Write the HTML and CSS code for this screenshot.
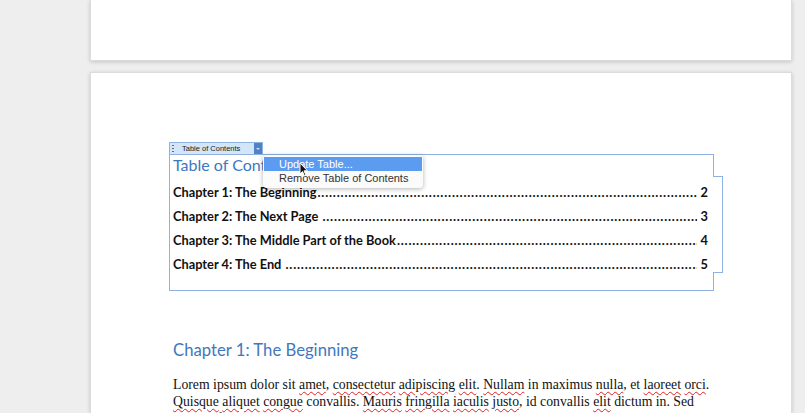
FILE: index.html
```html
<!DOCTYPE html>
<html lang="en">
<head>
  <meta charset="UTF-8" />
  <title>Document</title>
  <link rel="stylesheet" href="styles.css">
</head>
<body>

  <div class="canvas">
    <div class="page page-top"></div>

    <div class="page page-main">
      <div class="toc-wrap">
        <div class="toc-tab">
          <span class="grip"></span>
          <span class="tab-label">Table of Contents</span>
          <span class="tab-drop"></span>
        </div>

        <div class="toc-box">
          <div class="toc-title">Table of Contents</div>
          <div class="toc-row"><span>Chapter 1: The Beginning</span><span class="dots"></span><span>2</span></div>
          <div class="toc-row"><span>Chapter 2: The Next Page&nbsp;</span><span class="dots"></span><span>3</span></div>
          <div class="toc-row"><span>Chapter 3: The Middle Part of the Book</span><span class="dots"></span><span>4</span></div>
          <div class="toc-row"><span>Chapter 4: The End&nbsp;</span><span class="dots"></span><span>5</span></div>
        </div>

        <!-- context menu -->
        <div class="menu">
          <div class="menu-item active">Update Table...</div>
          <div class="menu-item">Remove Table of Contents</div>
        </div>

        <svg class="cursor" width="10" height="15" viewBox="0 0 10 15">
          <path d="M1 1 L1 12 L3.5 9.5 L5.5 14 L7 13.3 L5 8.8 L8.5 8.8 Z" fill="#111" stroke="#fff" stroke-width="1"/>
        </svg>
      </div>

      <h2 class="chapter">Chapter 1: The Beginning</h2>

      <p class="body-text">
        Lorem ipsum dolor sit <u>amet</u>, <u>consectetur</u> <u>adipiscing</u> <u>elit</u>. <u>Nullam</u> in maximus <u>nulla</u>, et <u>laoreet</u> <u>orci</u>.<br>
        <u>Quisque</u> <u>aliquet</u> <u>congue</u> convallis. <u>Mauris</u> <u>fringilla</u> <u>iaculis</u> <u>justo</u>, id convallis <u>elit</u> dictum in. Sed<br>
        <u>ultrices</u> <u>fermentum</u> tortor, in semper eros. <u>Quisque</u> semper ipsum vel nibh <u>vehicula</u>. Proin id lobortis elit.
      </p>
    </div>
  </div>

</body>
</html>
```

FILE: styles.css
```css
body {
  margin: 0;
  background: #eeeeee;
  overflow: hidden;
  height: 413px;
}

.canvas {
  padding-left: 90px;
  height: 413px;
  overflow: hidden;
}

.page {
  width: 702px;
  background: #fff;
  box-shadow: 0 1px 4px rgba(0,0,0,0.18);
  border: 1px solid #dcdcdc;
  box-sizing: border-box;
}

.page-top {
  height: 61px;
  border-top: none;
}

.page-main {
  margin-top: 11px;
  height: 341px;
  overflow: hidden;
  padding: 69px 0 0 78px;
  border-bottom: none;
}

.toc-wrap {
  position: relative;
  width: 545px;
}

/* content control tab */
.toc-tab {
  display: flex;
  height: 12px;
  width: 94px;
  background: #d3e5f8;
  border: 1px solid #8eb3e2;
  border-bottom: none;
  box-sizing: border-box;
  align-items: center;
}

.grip {
  width: 2px;
  height: 8px;
  margin-left: 2px;
  background: repeating-linear-gradient(#5a6e8a 0 1px, transparent 1px 3px);
}

.tab-label {
  flex: 1;
  font-family: "Liberation Sans", Arial, sans-serif;
  font-size: 7.5px;
  color: #222;
  padding-left: 8px;
  line-height: 11px;
}

.tab-drop {
  width: 8px;
  height: 11px;
  background: #4f82c6;
  position: relative;
}

.tab-drop::after {
  content: "";
  position: absolute;
  left: 2px;
  top: 5px;
  border-left: 2px solid transparent;
  border-right: 2px solid transparent;
  border-top: 2px solid #c9dcf4;
}

.toc-box {
  position: relative;
  border: 1px solid #8fb2e3;
  padding: 0 5px 14px 3px;
  font-family: Lato, "Open Sans", sans-serif;
}

.toc-box::after {
  content: "";
  position: absolute;
  top: 21px;
  bottom: 17px;
  right: -10px;
  width: 9px;
  background: #fff;
  border: 1px solid #8fb2e3;
  border-left: none;
}

.toc-title {
  font-size: 16px;
  line-height: 20px;
  margin-bottom: 5px;
  color: #3c78c0;
}

.toc-row {
  display: flex;
  font-size: 12.8px;
  font-weight: bold;
  line-height: 24px;
  color: #111;
  white-space: nowrap;
}

.dots {
  flex: 1;
  overflow: hidden;
  margin: 0 4px 0 1px;
}

.dots::before {
  content: "........................................................................................................................................................................................................";
  letter-spacing: 0.8px;
}

/* context menu */
.menu {
  position: absolute;
  left: 94px;
  top: 13px;
  width: 160px;
  background: #fbfbfb;
  border-radius: 4px;
  box-shadow: 0 1px 5px rgba(0,0,0,0.3);
  padding: 2px 0 3px;
  font-family: "Liberation Sans", Arial, sans-serif;
  font-size: 11px;
  z-index: 2;
}

.menu-item {
  line-height: 14px;
  padding-left: 15px;
  margin: 0 1px;
  color: #333;
}

.menu-item.active {
  background: #5b9cf0;
  color: #fff;
}

.cursor {
  position: absolute;
  left: 130px;
  top: 20px;
  z-index: 3;
}

.chapter {
  margin: 48px 0 0 4px;
  font-family: Lato, "Open Sans", sans-serif;
  font-weight: 400;
  font-size: 16.7px;
  line-height: 22px;
  color: #3f78bd;
}

.body-text {
  margin: 15px 0 0 4px;
  font-family: "Liberation Serif", "Times New Roman", serif;
  font-size: 13.75px;
  line-height: 17px;
  color: #111;
  white-space: nowrap;
}

.body-text u {
  text-decoration: underline wavy #e02020;
  text-decoration-thickness: 1px;
  text-underline-offset: 2px;
}
```
